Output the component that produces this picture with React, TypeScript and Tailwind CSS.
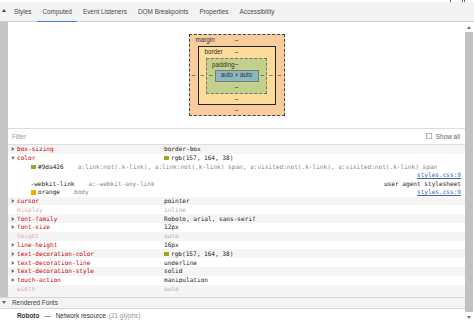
import React from "react";

type Row = {
  name: string;
  value: string;
  swatch?: string;
  disabled?: boolean;
  expanded?: boolean;
};

const rowsA: Row[] = [
  { name: "box-sizing", value: "border-box" },
  { name: "color", value: "rgb(157, 164, 38)", swatch: "#9da426", expanded: true },
];

const rowsB: Row[] = [
  { name: "cursor", value: "pointer" },
  { name: "display", value: "inline", disabled: true },
  { name: "font-family", value: "Roboto, arial, sans-serif" },
  { name: "font-size", value: "12px" },
  { name: "height", value: "auto", disabled: true },
  { name: "line-height", value: "16px" },
  { name: "text-decoration-color", value: "rgb(157, 164, 38)", swatch: "#9da426" },
  { name: "text-decoration-line", value: "underline" },
  { name: "text-decoration-style", value: "solid" },
  { name: "touch-action", value: "manipulation" },
  { name: "width", value: "auto", disabled: true },
];

function Tri({ down }: { down?: boolean }) {
  return (
    <svg width="4" height="4" viewBox="0 0 4 4" className="block">
      {down ? (
        <polygon points="0,0.7 4,0.7 2,3.5" fill="#727272" />
      ) : (
        <polygon points="0.7,0 3.5,2 0.7,4" fill="#727272" />
      )}
    </svg>
  );
}

function Swatch({ c }: { c: string }) {
  return <span className="inline-block w-[4.5px] h-[4.5px] mr-[2.5px] shrink-0" style={{ background: c }} />;
}

function PropRow({ r, gray, tall }: { r: Row; gray: boolean; tall?: boolean }) {
  return (
    <div className={`flex items-start ${tall ? "h-[12.4px]" : "h-[8.8px]"} ${gray ? "bg-[#f5f5f5]" : "bg-white"}`}>
      <div className="flex items-center h-[8.8px] w-full">
        <div className="w-[9px] pl-[3px] flex items-center">{r.disabled ? null : <Tri down={r.expanded} />}</div>
        <div className={`w-[147px] ${r.disabled ? "text-[#d9b1b1]" : "text-[#c80000]"}`}>{r.name}</div>
        <div className={`flex items-center ${r.disabled ? "text-[#b0b0b0]" : "text-[#222]"}`}>
          {r.swatch ? <Swatch c={r.swatch} /> : null}
          {r.value}
        </div>
      </div>
    </div>
  );
}

function Dash() {
  return <div className="flex items-center justify-center leading-none">–</div>;
}

function DashRow() {
  return <div className="col-span-3 flex justify-center items-center leading-none">–</div>;
}

function BoxModel() {
  return (
    <div className="w-[96px] h-[82px] border border-dashed border-[#444] bg-[#f9cc9d] grid grid-cols-[8px_78px_8px] grid-rows-[11px_59px_10px] text-[6.3px] text-[#333] relative">
      <span className="absolute left-[6px] top-[2px] leading-[6px]">margin</span>
      <DashRow />
      <Dash />
      <div className="w-[78px] h-[59px] border border-[#222] bg-[#fddc9b] grid grid-cols-[7.5px_61px_7.5px] grid-rows-[10.5px_36px_10.5px] relative">
        <span className="absolute left-[6px] top-[2px] leading-[6px]">border</span>
        <DashRow />
        <Dash />
        <div className="w-[61px] h-[36px] border border-dashed border-[#777] bg-[#c3d08b] grid grid-cols-[7.5px_44px_7.5px] grid-rows-[11px_12px_11px] relative">
          <span className="absolute left-[5px] top-[3.5px] leading-[6px]">padding</span>
          <DashRow />
          <Dash />
          <div className="w-[44px] h-[12px] border border-[#7a7a7a] bg-[#8cb6c0] flex items-center justify-center leading-none">
            auto × auto
          </div>
          <Dash />
          <DashRow />
        </div>
        <Dash />
        <DashRow />
      </div>
      <Dash />
      <DashRow />
    </div>
  );
}

export default function App() {
  const tabs = ["Styles", "Computed", "Event Listeners", "DOM Breakpoints", "Properties", "Accessibility"];
  return (
    <div className="w-[474px] h-[323px] overflow-hidden bg-white relative font-['Liberation_Sans',Arial,sans-serif] text-[#333]">
      {/* top strip */}
      <div className="h-[2px] bg-white relative">
        <span className="absolute left-[450px] top-0 w-[1px] h-[2px] bg-[#666]" />
        <span className="absolute left-[462px] top-0 w-[1px] h-[2px] bg-[#666]" />
        <span className="absolute left-[464px] top-0 w-[1px] h-[2px] bg-[#666]" />
      </div>
      {/* tab bar */}
      <div className="flex h-[20px] bg-[#f3f3f3] border-b border-[#cfcfcf]">
        <div className="w-[8.5px] flex justify-center pt-[7px]">
          <svg width="4" height="3" viewBox="0 0 4 3" className="block">
            <polygon points="0,3 4,3 2,0" fill="#444" />
          </svg>
        </div>
        {tabs.map((t) => (
          <div key={t} className="px-[5.5px] flex items-center text-[6.4px] text-[#4a4a4a] relative">
            {t}
            {t === "Computed" ? <span className="absolute left-0 right-0 bottom-[-1px] h-[1.5px] bg-[#4a7fd0]" /> : null}
          </div>
        ))}
      </div>
      <div className="flex h-[301px]">
        <div className="flex-1 flex flex-col">
          <div className="flex h-[275px]">
            <div className="w-[8px] bg-[#c6c6c6]" />
            <div className="flex-1 flex flex-col">
              {/* box model */}
              <div className="h-[106px] pt-[12px] flex justify-center">
                <BoxModel />
              </div>
              {/* filter */}
              <div className="h-[17px] border-t border-b border-[#dddddd] flex items-center justify-between pl-[4px] pr-[5px] text-[6.4px]">
                <span className="text-[#9a9a9a]">Filter</span>
                <div className="flex items-center gap-[4px] text-[#666]">
                  <span className="w-[6px] h-[6px] border border-[#b5b5b5] bg-white inline-block" />
                  <span>Show all</span>
                </div>
              </div>
              {/* rows */}
              <div className="font-['DejaVu_Sans_Mono',monospace] text-[6.1px] leading-none flex flex-col">
                {rowsA.map((r, i) => (
                  <PropRow key={r.name} r={r} gray={i % 2 === 0} />
                ))}
                <div className="bg-white flex flex-col">
                  <div className="h-[8.5px] flex items-center pl-[23px]">
                    <Swatch c="#9da426" />
                    <span className="text-[#222]">#9da426</span>
                    <span className="ml-[14px] text-[#888]">
                      a:link:not(.k-link), a:link:not(.k-link) span, a:visited:not(.k-link), a:visited:not(.k-link) span
                    </span>
                  </div>
                  <div className="h-[8.5px] flex items-center justify-end pr-[4px]">
                    <span className="text-[#3a62b5] underline">styles.css:9</span>
                  </div>
                  <div className="h-[8.5px] flex items-center pl-[22.5px] pr-[4px]">
                    <span className="text-[#222]">-webkit-link</span>
                    <span className="ml-[14px] text-[#888]">a:-webkit-any-link</span>
                    <span className="ml-auto text-[#222]">user agent stylesheet</span>
                  </div>
                  <div className="h-[8.5px] flex items-center pl-[23px] pr-[4px]">
                    <Swatch c="#ffa500" />
                    <span className="text-[#222]">orange</span>
                    <span className="ml-[14px] text-[#888]">body</span>
                    <span className="ml-auto text-[#3a62b5] underline">styles.css:9</span>
                  </div>
                </div>
                {rowsB.map((r, i) => (
                  <PropRow key={r.name} r={r} gray={i % 2 === 0} tall={r.name === "width"} />
                ))}
              </div>
            </div>
          </div>
          {/* rendered fonts */}
          <div className="h-[13px] border-t border-b border-[#d6d6d6] bg-[#f3f3f3] flex items-center text-[6.4px] text-[#444]">
            <div className="w-[8px] flex justify-center">
              <svg width="4" height="3" viewBox="0 0 4 3" className="block">
                <polygon points="0,0 4,0 2,3" fill="#666" />
              </svg>
            </div>
            <span className="ml-[4px]">Rendered Fonts</span>
          </div>
          <div className="h-[16px] flex items-center pl-[17px] text-[6.4px] text-[#333]">
            <span className="font-bold">Roboto</span>
            <span className="mx-[5px]">—</span>
            <span>Network resource</span>
            <span className="ml-[3px] text-[#999]">(21 glyphs)</span>
          </div>
        </div>
        {/* right scrollbar */}
        <div className="w-[9px] pr-[1px] flex flex-col items-stretch">
          <div className="h-[10px] flex items-center justify-center">
            <svg width="4" height="3" viewBox="0 0 4 3" className="block">
              <polygon points="0,3 4,3 2,0" fill="#777" />
            </svg>
          </div>
          <div className="h-[280px] bg-[#c1c1c1]" />
          <div className="h-[10px] flex items-center justify-center">
            <svg width="4" height="3" viewBox="0 0 4 3" className="block">
              <polygon points="0,0 4,0 2,3" fill="#777" />
            </svg>
          </div>
        </div>
      </div>
    </div>
  );
}
